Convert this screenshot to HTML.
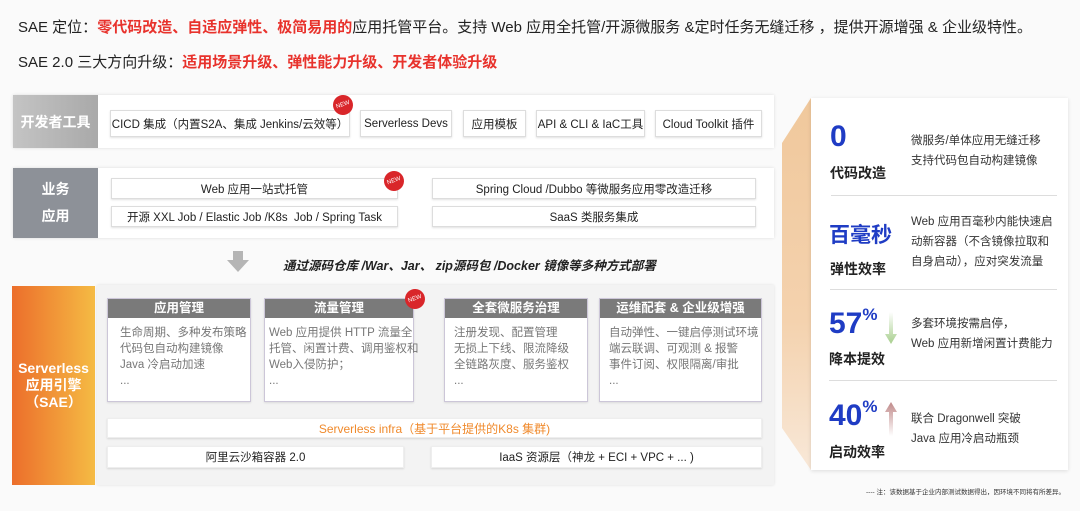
<!DOCTYPE html>
<html><head><meta charset="utf-8"><style>
*{margin:0;padding:0;box-sizing:border-box}
body{width:1080px;height:511px;overflow:hidden;background:#fafafa;font-family:"Liberation Sans","Noto Sans CJK SC",sans-serif;color:#222;position:relative}
.a{position:absolute}
.t{font-size:15px;white-space:nowrap}
.r{color:#e8322c;font-weight:bold}
.row{background:#fff;box-shadow:0 0 3px rgba(0,0,0,.12)}
.lab{color:#fff;font-weight:bold;display:flex;align-items:center;justify-content:center;text-align:center}
.bx{background:#fff;border:1px solid #ddd;box-shadow:0 1px 2px rgba(0,0,0,.12);font-size:11.5px;display:flex;align-items:center;justify-content:center;white-space:nowrap}
.new{width:20px;height:20px;border-radius:50%;background:#d9262a;color:#fff;font-size:6px;display:flex;align-items:center;justify-content:center;transform:rotate(-20deg)}
.card{background:#fff;border:1px solid #ccc6d8;box-shadow:0 1px 2px rgba(0,0,0,.1)}
.card h4{background:#7a7a7a;color:#fff;font-size:12.5px;height:19px;line-height:19px;text-align:center}
.card p{font-size:11.5px;color:#777;line-height:16px;padding:7px 0 0 12px;white-space:nowrap}
.big{color:#1f3cc4;font-weight:bold}
.sub{font-weight:bold;font-size:14px;color:#222}
.desc{font-size:11.5px;line-height:20px;color:#333;white-space:nowrap}
.hr{height:1px;background:#ddd}
</style></head><body>
<div class="a t" style="left:18px;top:16px">SAE 定位：<span class="r">零代码改造、自适应弹性、极简易用的</span>应用托管平台。支持 Web 应用全托管/开源微服务 &amp;定时任务无缝迁移 ，提供开源增强 &amp; 企业级特性。</div>
<div class="a t" style="left:18px;top:51px">SAE 2.0 三大方向升级：<span class="r">适用场景升级、弹性能力升级、开发者体验升级</span></div>

<div class="a row" style="left:13px;top:95px;width:761px;height:53px"></div>
<div class="a lab" style="left:13px;top:95px;width:85px;height:53px;background:linear-gradient(90deg,#c4c4c4,#a9a9a9);font-size:14px">开发者工具</div>
<div class="a bx" style="left:110px;top:110px;width:240px;height:27px">CICD 集成（内置S2A、集成 Jenkins/云效等）</div>
<div class="a bx" style="left:360px;top:110px;width:92px;height:27px">Serverless Devs</div>
<div class="a bx" style="left:463px;top:110px;width:63px;height:27px">应用模板</div>
<div class="a bx" style="left:536px;top:110px;width:109px;height:27px">API &amp; CLI &amp; IaC工具</div>
<div class="a bx" style="left:655px;top:110px;width:107px;height:27px">Cloud Toolkit 插件</div>
<div class="a new" style="left:333px;top:95px">NEW</div>

<div class="a row" style="left:13px;top:168px;width:761px;height:70px"></div>
<div class="a lab" style="left:13px;top:168px;width:85px;height:70px;background:#8d9198;font-size:14px;line-height:27px">业务<br>应用</div>
<div class="a bx" style="left:111px;top:178px;width:287px;height:21px">Web 应用一站式托管</div>
<div class="a bx" style="left:111px;top:206px;width:287px;height:21px">开源 XXL Job / Elastic Job /K8s&nbsp; Job / Spring Task</div>
<div class="a bx" style="left:432px;top:178px;width:324px;height:21px">Spring Cloud /Dubbo 等微服务应用零改造迁移</div>
<div class="a bx" style="left:432px;top:206px;width:324px;height:21px">SaaS 类服务集成</div>
<div class="a new" style="left:384px;top:171px">NEW</div>

<svg class="a" style="left:226px;top:251px" width="24" height="22"><polygon points="7,0 17,0 17,9 23,9 12,21 1,9 7,9" fill="#b5b5b5"/></svg>
<div class="a" style="left:283px;top:255px;font-size:12.5px;font-weight:bold;font-style:italic;white-space:nowrap">通过源码仓库 /War、Jar、 zip源码包 /Docker 镜像等多种方式部署</div>

<div class="a" style="left:97px;top:285px;width:677px;height:200px;background:#f3f3f3;box-shadow:0 0 3px rgba(0,0,0,.1)"></div>
<div class="a lab" style="left:12px;top:286px;width:83px;height:199px;background:linear-gradient(90deg,#ec6e2b,#f5bb44);font-size:14px;line-height:17px">Serverless<br>应用引擎<br>（SAE）</div>
<div class="a card" style="left:107px;top:298px;width:144px;height:104px"><h4>应用管理</h4><p style="padding-left:12px">生命周期、多种发布策略<br>代码包自动构建镜像<br>Java 冷启动加速<br>...</p></div>
<div class="a card" style="left:264px;top:298px;width:150px;height:104px"><h4>流量管理</h4><p style="padding-left:4px">Web 应用提供 HTTP 流量全<br>托管、闲置计费、调用鉴权和<br>Web入侵防护；<br>...</p></div>
<div class="a new" style="left:405px;top:289px">NEW</div>
<div class="a card" style="left:444px;top:298px;width:144px;height:104px"><h4>全套微服务治理</h4><p style="padding-left:9px">注册发现、配置管理<br>无损上下线、限流降级<br>全链路灰度、服务鉴权<br>...</p></div>
<div class="a card" style="left:599px;top:298px;width:163px;height:104px"><h4>运维配套 &amp; 企业级增强</h4><p style="padding-left:9px">自动弹性、一键启停测试环境<br>端云联调、可观测 &amp; 报警<br>事件订阅、权限隔离/审批<br>...</p></div>
<div class="a bx" style="left:107px;top:418px;width:655px;height:20px;color:#f08a2c;font-size:12px;border-color:#eee">Serverless infra（基于平台提供的K8s 集群)</div>
<div class="a bx" style="left:107px;top:446px;width:297px;height:22px;border-color:#eee">阿里云沙箱容器 2.0</div>
<div class="a bx" style="left:431px;top:446px;width:331px;height:22px;border-color:#eee">IaaS 资源层（神龙 + ECI + VPC + ... )</div>

<div class="a" style="left:782px;top:98px;width:30px;height:372px;background:linear-gradient(180deg,#f0c89c,#f4d2ae 60%,#f8e8d8);clip-path:polygon(29px 0,30px 0,30px 372px,29px 372px,0 330px,0 45px)"></div>
<div class="a" style="left:811px;top:98px;width:257px;height:372px;background:#fff;box-shadow:0 1px 4px rgba(0,0,0,.12)"></div>
<div class="a big" style="left:830px;top:120px;font-size:30px">0</div>
<div class="a sub" style="left:830px;top:163px">代码改造</div>
<div class="a desc" style="left:911px;top:131px">微服务/单体应用无缝迁移<br>支持代码包自动构建镜像</div>
<div class="a hr" style="left:831px;top:195px;width:226px"></div>
<div class="a big" style="left:829px;top:219px;font-size:21px">百毫秒</div>
<div class="a sub" style="left:830px;top:259px">弹性效率</div>
<div class="a desc" style="left:911px;top:212px">Web 应用百毫秒内能快速启<br>动新容器（不含镜像拉取和<br>自身启动），应对突发流量</div>
<div class="a hr" style="left:830px;top:289px;width:227px"></div>
<div class="a big" style="left:829px;top:307px;font-size:30px">57<sup style="font-size:17px;vertical-align:top;position:relative;top:-2px">%</sup></div>
<svg class="a" style="left:885px;top:312px" width="12" height="32"><defs><linearGradient id="g1" x1="0" y1="0" x2="0" y2="1"><stop offset="0" stop-color="#fff"/><stop offset="1" stop-color="#a8cf8e"/></linearGradient></defs><polygon points="4,0 8,0 8,22 12,22 6,32 0,22 4,22" fill="url(#g1)"/></svg>
<div class="a sub" style="left:829px;top:349px">降本提效</div>
<div class="a desc" style="left:911px;top:314px">多套环境按需启停，<br>Web 应用新增闲置计费能力</div>
<div class="a hr" style="left:829px;top:380px;width:228px"></div>
<div class="a big" style="left:829px;top:399px;font-size:30px">40<sup style="font-size:17px;vertical-align:top;position:relative;top:-2px">%</sup></div>
<svg class="a" style="left:885px;top:402px" width="12" height="34"><defs><linearGradient id="g2" x1="0" y1="0" x2="0" y2="1"><stop offset="0" stop-color="#c08a8a"/><stop offset="1" stop-color="#fff"/></linearGradient></defs><polygon points="6,0 12,10 8,10 8,34 4,34 4,10 0,10" fill="url(#g2)"/></svg>
<div class="a sub" style="left:829px;top:442px">启动效率</div>
<div class="a desc" style="left:911px;top:409px">联合 Dragonwell 突破<br>Java 应用冷启动瓶颈</div>
<div class="a" style="left:866px;top:486px;font-size:6.5px;color:#333;white-space:nowrap">---- 注：该数据基于企业内部测试数据得出，因环境不同将有所差异。</div>
</body></html>
